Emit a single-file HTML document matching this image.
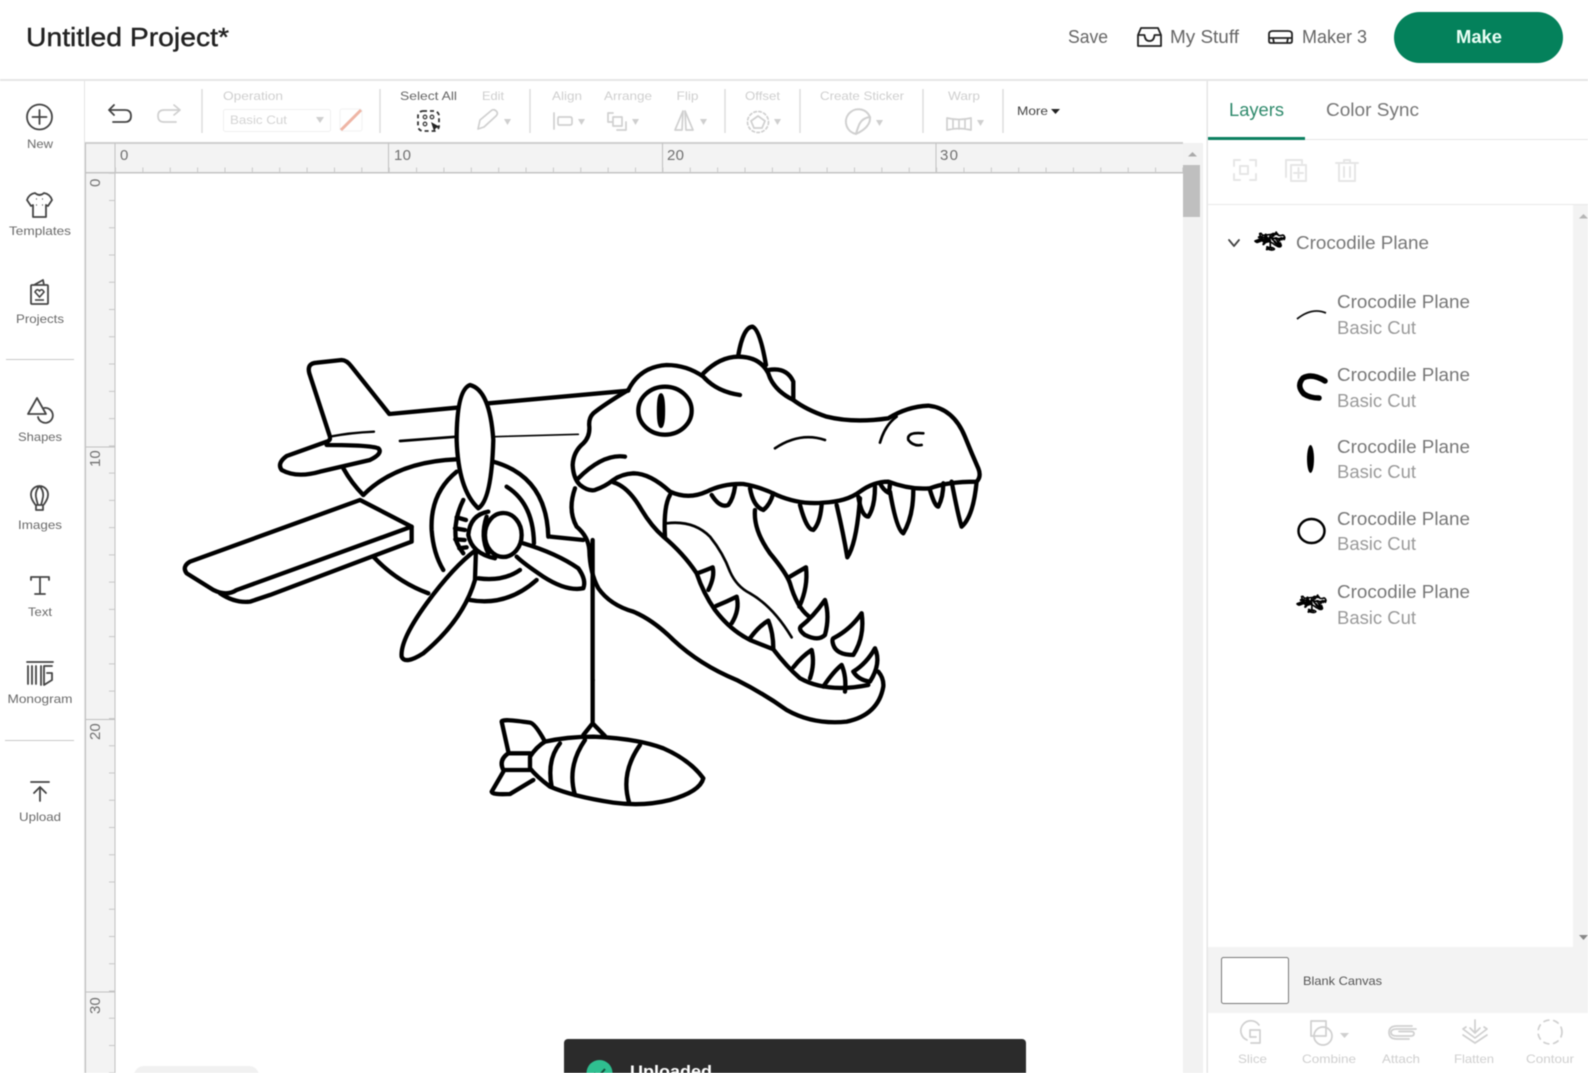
<!DOCTYPE html>
<html lang="en">
<head>
<meta charset="utf-8">
<title>Untitled Project</title>
<style>
html,body{margin:0;padding:0;background:#fff;width:1588px;height:1073px;overflow:hidden}
svg{display:block;position:absolute;left:0;top:0;filter:blur(.5px)}
text{font-family:"Liberation Sans",sans-serif}
.l{font-size:12px;fill:#6a6a6a;text-anchor:middle}
.d{font-size:12px;fill:#cfcfcf;text-anchor:middle}
.n{font-size:18px;fill:#777}
.b{font-size:18px;fill:#9a9a9a}
.r{font-size:15px;fill:#707070}
.ic{fill:none;stroke:#444;stroke-width:1.800;stroke-linecap:round;stroke-linejoin:round}
.dis{fill:none;stroke:#d0d0d0;stroke-width:1.700;stroke-linecap:round;stroke-linejoin:round}
.pale{fill:none;stroke:#e6e6e6;stroke-width:2;stroke-linecap:round;stroke-linejoin:round}
.tri{fill:#cfcfcf}
</style>
</head>
<body>
<svg width="1588" height="1073" viewBox="0 0 1588 1073" xmlns="http://www.w3.org/2000/svg">
<defs>
<g id="art" fill="none" stroke="#000" stroke-linecap="round" stroke-linejoin="round">
  <!-- plane -->
  <g transform="translate(170 340) scale(.3333)">
    <path d="M480 290L418 100Q410 70 440 68L515 60Q530 60 545 80L658 222L860 203"/>
    <path d="M955 190L1375 152"/>
    <path d="M480 295Q480 302 470 305L350 348Q320 370 335 390Q380 415 450 395L600 360Q640 340 625 325Q600 315 470 315"/>
    <path d="M480 290Q540 278 612 275" style="stroke-width:7"/>
    <path d="M690 303L860 290" style="stroke-width:8"/>
    <path d="M975 290L1225 283" style="stroke-width:5"/>
    <path d="M520 385Q545 430 580 465"/>
    <path d="M580 465Q680 365 860 358"/>
    <path d="M610 650Q680 725 775 760"/>
    <path d="M570 480L60 665Q35 680 50 700L130 750Q170 770 200 750L725 560L570 480Z"/>
    <path d="M150 760Q195 790 240 785L300 765L725 605L725 560"/>
    <path d="M860 395Q780 460 785 570Q790 640 820 690"/>
    <path d="M970 365Q1130 410 1135 590"/>
    <path d="M1100 720Q1010 800 900 780"/>
    <path d="M1010 440Q1090 490 1092 610"/>
    <path d="M1050 690Q1000 725 925 715"/>
    <path d="M880 480Q850 540 858 600Q865 620 880 640"/>
    <path d="M860 532L888 540M855 565L885 570M856 598L884 600M868 625L890 622"/>
    <path fill="#fff" d="M955 515Q900 525 895 585Q905 640 975 655"/>
    <ellipse cx="1000" cy="585" rx="55" ry="66" fill="#fff"/>
    <path d="M950 530Q930 590 955 640"/>
    <path fill="#fff" d="M900 135Q860 150 860 300Q865 450 925 505Q965 480 970 300Q960 150 900 135Z"/>
    <path fill="#fff" d="M918 630Q850 680 770 790Q690 900 695 950Q705 975 760 940Q880 840 915 720Z"/>
    <path fill="#fff" d="M1060 610Q1160 640 1225 685Q1250 720 1240 745Q1190 755 1120 710Q1060 670 1040 650"/>
    <path d="M1140 590L1240 600"/>
    <path d="M1268 600V1020"/>
  </g>
  <!-- crocodile -->
  <g transform="translate(560 310) scale(.3333)">
    <path d="M205 240Q130 285 100 310Q85 325 88 350Q90 380 70 400Q40 425 38 465Q40 505 60 525Q85 545 105 540Q135 530 160 510Q185 492 220 490Q270 490 330 545Q385 570 440 545Q490 520 550 522Q600 530 650 555Q720 585 790 578Q860 575 900 545Q940 515 985 515Q1050 540 1110 535Q1160 515 1250 515Q1265 500 1255 475Q1235 430 1215 380Q1180 295 1105 287Q1040 290 985 325Q880 340 800 320Q740 300 700 270Q640 240 625 190Q600 140 535 140Q480 140 430 190"/>
    <path d="M205 240Q240 170 320 165Q380 165 430 200Q470 245 540 255"/>
    <path d="M535 135Q550 50 578 50Q600 60 618 165"/>
    <path d="M625 180Q680 170 700 215L700 270"/>
    <ellipse cx="315" cy="302" rx="80" ry="72"/>
    <ellipse cx="303" cy="302" rx="6" ry="46" fill="#000"/>
    <path d="M195 440Q130 430 55 505"/>
    <path d="M645 415Q720 365 795 390" style="stroke-width:8"/>
    <path d="M1090 370Q1040 365 1045 390Q1060 410 1085 405" style="stroke-width:8"/>
    <path d="M960 398Q975 345 1010 320" style="stroke-width:8"/>
    <path d="M45 535Q22 600 50 650Q85 680 88 720Q90 790 115 835Q150 885 220 905Q280 930 340 990Q420 1065 530 1110Q610 1150 680 1200Q760 1245 860 1235Q955 1215 970 1130Q972 1105 955 1085"/>
    <path d="M160 517Q205 530 245 600Q275 650 310 680Q370 730 410 790Q430 850 465 900Q510 960 570 990Q620 1010 640 1018Q680 1070 720 1105Q800 1150 925 1125"/>
    <path d="M330 555Q310 590 315 680"/>
    <path d="M320 640Q400 630 450 680Q490 730 510 785Q530 830 570 850Q640 890 695 982" style="stroke-width:8"/>
    <path d="M585 600Q580 660 630 730Q680 790 690 820Q710 890 745 918"/>
    <path d="M412 790Q440 780 458 772Q465 800 445 840"/>
    <path d="M468 888Q500 875 530 860Q540 900 515 940"/>
    <path d="M570 985Q595 950 625 932Q640 970 640 1015"/>
    <path d="M700 1072Q725 1040 755 1020Q765 1060 750 1105"/>
    <path d="M790 1130Q820 1085 845 1065Q860 1100 855 1145"/>
    <path d="M690 800Q715 785 738 772Q745 830 718 890"/>
    <path d="M722 950Q760 920 795 870Q810 920 795 975Q775 995 735 975Q715 960 722 950Z"/>
    <path d="M820 985Q870 960 905 910Q915 980 880 1035Q830 1035 820 1005Q815 990 820 985Z"/>
    <path d="M880 1085Q920 1060 945 1015Q965 1060 930 1115Q895 1110 880 1085Z"/>
    <path d="M455 555Q480 595 505 585Q520 565 525 530"/>
    <path d="M570 535Q580 590 610 600Q630 585 640 550"/>
    <path d="M720 585Q740 660 760 660Q780 640 785 585"/>
    <path d="M830 585Q850 670 862 742Q890 700 900 565"/>
    <path d="M895 560Q905 620 925 620Q945 590 945 530"/>
    <path d="M960 520Q970 540 985 548Q990 535 990 520"/>
    <path d="M990 545Q1010 660 1030 670Q1060 620 1060 540"/>
    <path d="M1110 540Q1125 590 1135 590Q1150 560 1150 520"/>
    <path d="M1175 515Q1195 620 1205 650Q1240 620 1250 515"/>
  </g>
  <!-- bomb -->
  <g transform="translate(470 680) scale(.3333)">
    <path d="M225 185Q290 170 370 170Q500 175 580 205Q660 240 700 295Q690 335 600 360Q520 380 430 368Q310 350 240 320Q200 290 180 265L180 230Q200 200 225 185Z"/>
    <path d="M270 190Q230 240 245 320"/>
    <path d="M345 180Q290 260 315 345"/>
    <path d="M510 195Q450 280 478 370"/>
    <path d="M115 215L95 125Q95 115 180 128Q195 130 225 185"/>
    <path d="M100 275L65 335Q65 345 120 342L190 300"/>
    <path d="M180 220L115 220Q85 240 100 270L180 270"/>
    <path d="M368 0V125"/>
    <path d="M340 165L368 130L405 168"/>
  </g>
</g>
</defs>

<!-- page bg -->
<rect width="1588" height="1073" fill="#fff"/>

<!-- header -->
<text x="26" y="46" font-size="26" fill="#222" stroke="#222" stroke-width=".4" textLength="203" lengthAdjust="spacingAndGlyphs">Untitled Project*</text>
<text x="1068" y="43" font-size="18" fill="#666" textLength="40" lengthAdjust="spacingAndGlyphs">Save</text>
<path class="ic" style="stroke:#222" d="M1141 28H1158L1161 35V46H1138V35ZM1138 35H1144.500Q1145 41 1149.500 41Q1154 41 1154.500 35H1161"/>
<text x="1170" y="43" font-size="18" fill="#666" textLength="69" lengthAdjust="spacingAndGlyphs">My Stuff</text>
<path class="ic" style="stroke:#222" d="M1269 41V34Q1269 31 1273 31H1288Q1292 31 1292 34V41Q1292 43 1290 43H1271Q1269 43 1269 41ZM1269 38H1273L1274 43M1292 38H1288L1287 43M1273 38H1288"/>
<text x="1302" y="43" font-size="18" fill="#666" textLength="65" lengthAdjust="spacingAndGlyphs">Maker 3</text>
<rect x="1394" y="12" width="169" height="51" rx="25.500" fill="#04815b"/>
<text x="1456" y="43" font-size="18" font-weight="700" fill="#eafff6" textLength="46" lengthAdjust="spacingAndGlyphs">Make</text>
<rect x="0" y="79" width="1588" height="2" fill="#e6e6e6"/>

<!-- sidebar -->
<rect x="84" y="81" width="1" height="992" fill="#e4e4e4"/>
<circle cx="39.500" cy="117" r="12.500" class="ic"/>
<path class="ic" d="M39.500 110V124M32.500 117H46.500"/>
<text class="l" x="40" y="148" textLength="26" lengthAdjust="spacingAndGlyphs">New</text>
<path class="ic" d="M35 193Q39.500 197 44 193Q50 194 52 200L48 206L46 205V217H33V205L31 206L27 200Q29 194 35 193Z"/>
<path d="M36 199h1M42 199h1M36 205h1M42 205h1" stroke="#555" stroke-width="1.200"/>
<text class="l" x="40" y="235" textLength="62" lengthAdjust="spacingAndGlyphs">Templates</text>
<path class="ic" d="M32 285H47Q48 285 48 286V303Q48 304 47 304H32Q31 304 31 303V286Q31 285 32 285ZM34 285L43 280L44 285"/>
<path d="M39.500 297L35 292Q37 288 39.500 291Q42 288 44 292Z" fill="none" stroke="#444" stroke-width="1.600"/>
<path d="M35 300H44" stroke="#444" stroke-width="1.600"/>
<text class="l" x="40" y="323" textLength="48" lengthAdjust="spacingAndGlyphs">Projects</text>
<rect x="6" y="359" width="68" height="1" fill="#c8c8c8"/>
<path class="ic" d="M37 398L28 414H46Z"/>
<path class="ic" d="M44 408A7.500 7.500 0 1 1 38 417"/>
<text class="l" x="40" y="441" textLength="44" lengthAdjust="spacingAndGlyphs">Shapes</text>
<path class="ic" d="M39.500 486A8.500 8.500 0 0 1 48 495Q48 499 43.500 505H35.500Q31 499 31 495A8.500 8.500 0 0 1 39.500 486ZM39.500 486Q35 491 36 497Q37 502 38 505M39.500 486Q44 491 43 497Q42 502 41 505M36 505V510H43V505"/>
<text class="l" x="40" y="529" textLength="44" lengthAdjust="spacingAndGlyphs">Images</text>
<path class="ic" d="M31 580V577H49V580M40 577V594M35 594H45"/>
<text class="l" x="40" y="616" textLength="24" lengthAdjust="spacingAndGlyphs">Text</text>
<path class="ic" d="M27 662H53M28 666V684M32 666V684M36 666V684M41 666V685M44 666H52M44 666V685L52 680V673H47"/>
<text class="l" x="40" y="703" textLength="65" lengthAdjust="spacingAndGlyphs">Monogram</text>
<rect x="5" y="740" width="69" height="1" fill="#c8c8c8"/>
<path class="ic" d="M31 782H49M40 801V787M34 793L40 787L46 793"/>
<text class="l" x="40" y="821" textLength="42" lengthAdjust="spacingAndGlyphs">Upload</text>

<!-- toolbar -->
<path d="M202 89V133M380 89V133M530 89V133M725 89V133M800 89V133M923 89V133M1003 89V133" stroke="#dedede" stroke-width="1.500"/>
<path class="ic" d="M114 105L109 110L114 115M109 110H125Q131 110 131 116Q131 122 125 122H113"/>
<path class="dis" d="M174 105L180 110L174 115M180 110H164Q158 110 158 116Q158 122 164 122H176"/>
<text class="d" x="253" y="100" textLength="60" lengthAdjust="spacingAndGlyphs">Operation</text>
<rect x="223.500" y="109.500" width="107" height="22" rx="2" fill="#fff" stroke="#efefef"/>
<text x="230" y="124" font-size="12" fill="#d4d4d4" textLength="57" lengthAdjust="spacingAndGlyphs">Basic Cut</text>
<path class="tri" d="M316 117H324L320 123Z"/>
<rect x="340" y="109" width="22" height="22" rx="2" fill="#fff" stroke="#f2f2f2"/>
<path d="M341 130L361 110" stroke="#efb5a5" stroke-width="3"/>

<text class="l" x="428.500" y="100" textLength="57" lengthAdjust="spacingAndGlyphs" style="fill:#666">Select All</text>
<rect x="418" y="111" width="21" height="20" rx="5" fill="none" stroke="#333" stroke-width="1.800" stroke-dasharray="4 3"/>
<circle cx="425" cy="117" r="1.800" fill="none" stroke="#444" stroke-width="1.300"/>
<circle cx="432" cy="117" r="1.800" fill="none" stroke="#444" stroke-width="1.300"/>
<circle cx="425" cy="124" r="1.800" fill="none" stroke="#444" stroke-width="1.300"/>
<path d="M431 122L440 127L436 128L434 131Z" fill="#222"/>

<text class="d" x="493" y="100" textLength="22" lengthAdjust="spacingAndGlyphs">Edit</text>
<path class="dis" d="M478 129L480 120L492 110Q495 109 497 112Q498 114 496 116L484 127Z"/>
<path class="tri" d="M504 119H511L507.500 125Z"/>

<text class="d" x="567" y="100" textLength="30" lengthAdjust="spacingAndGlyphs">Align</text>
<path class="dis" d="M554 113V129M559 117H570Q572 117 572 119V123Q572 125 570 125H559Q558 125 558 123V119Q558 117 559 117Z"/>
<path class="tri" d="M578 119H585L581.500 125Z"/>

<text class="d" x="628" y="100" textLength="48" lengthAdjust="spacingAndGlyphs">Arrange</text>
<path class="dis" d="M613 113H608V122H612M613 117H622V126H613ZM626 122V130H617"/>
<path class="tri" d="M632 119H639L635.500 125Z"/>

<text class="d" x="687.500" y="100" textLength="22" lengthAdjust="spacingAndGlyphs">Flip</text>
<path class="dis" d="M683 111L675 130H682ZM685 111L693 130H686Z"/>
<path class="tri" d="M700 119H707L703.500 125Z"/>

<text class="d" x="762.500" y="100" textLength="35" lengthAdjust="spacingAndGlyphs">Offset</text>
<path class="dis" d="M758 116L765 121L762 128H754L751 121Z"/>
<circle cx="758" cy="122" r="10.500" class="dis" stroke-dasharray="2.500 2.500"/>
<path class="tri" d="M774 119H781L777.500 125Z"/>

<text class="d" x="862" y="100" textLength="84" lengthAdjust="spacingAndGlyphs">Create Sticker</text>
<path class="dis" style="stroke-width:2" d="M856 134A12.500 12.500 0 1 1 870 117Q862 118 859 125Q857 130 856 134ZM870 117Q871 127 856 134"/>
<path class="tri" d="M876 120H883L879.500 126Z"/>

<text class="d" x="964" y="100" textLength="32" lengthAdjust="spacingAndGlyphs">Warp</text>
<path class="dis" d="M947 118Q959 121 971 118V130Q959 127 947 130ZM953 120V129M959 120V129M965 120V129"/>
<path class="tri" d="M977 120H984L980.500 126Z"/>

<text x="1017" y="115" font-size="12" fill="#444" textLength="31" lengthAdjust="spacingAndGlyphs">More</text>
<path d="M1051 109H1060L1055.500 114Z" fill="#222"/>

<!-- rulers -->
<rect x="85" y="143" width="1098" height="30" fill="#f3f3f3"/>
<rect x="85" y="173" width="30" height="900" fill="#f3f3f3"/>
<rect x="85" y="142" width="1098" height="2" fill="#cfcfcf"/>
<rect x="85" y="172" width="1098" height="1.500" fill="#c4c4c4"/>
<rect x="85" y="143" width="1" height="930" fill="#bdbdbd"/>
<rect x="114.500" y="143" width="1" height="930" fill="#c0c0c0"/>
<path d="M388.500 143V172M662.500 143V172M936 143V172" stroke="#c0c0c0"/>
<path d="M85 447H115M85 719.500H115M85 992H115" stroke="#c0c0c0"/>
<line x1="115" y1="170" x2="1183" y2="170" stroke="#c8c8c8" stroke-width="5" stroke-dasharray="1 26.370"/>
<line x1="112" y1="173" x2="112" y2="1073" stroke="#c8c8c8" stroke-width="6" stroke-dasharray="1 26.260" stroke-dashoffset="-27"/>
<text class="r" x="120" y="160">0</text>
<text class="r" x="394" y="160" textLength="17">10</text>
<text class="r" x="667" y="160" textLength="17">20</text>
<text class="r" x="940" y="160" textLength="18">30</text>
<text class="r" transform="translate(100 187) rotate(-90)">0</text>
<text class="r" transform="translate(100 467) rotate(-90)">10</text>
<text class="r" transform="translate(100 740) rotate(-90)">20</text>
<text class="r" transform="translate(100 1014) rotate(-90)">30</text>

<!-- canvas scrollbar -->
<rect x="1183" y="143" width="23" height="930" fill="#f2f2f2"/>
<rect x="1183" y="165" width="17" height="52" fill="#bfbfbf"/>
<path d="M1188 156.500H1197L1192.500 152Z" fill="#aaa"/>
<rect x="1203" y="81" width="4" height="992" fill="#fff"/>
<rect x="1206.500" y="81" width="1.500" height="992" fill="#e6e6e6"/>

<!-- artwork -->
<use href="#art" stroke-width="13"/>

<!-- toast -->
<rect x="134" y="1066" width="125" height="20" rx="10" fill="#f1f1f1"/>
<rect x="564" y="1039" width="462" height="50" rx="4" fill="#2b2b2b"/>
<circle cx="599.500" cy="1073" r="13" fill="#2fbf90"/>
<path d="M594 1073L598 1077L605 1069" fill="none" stroke="#14503d" stroke-width="2"/>
<text x="630" y="1077" font-size="17" font-weight="700" fill="#fff" textLength="82" lengthAdjust="spacingAndGlyphs">Uploaded</text>

<!-- right panel -->
<text x="1229" y="116" font-size="18" fill="#2f8a6c" textLength="55" lengthAdjust="spacingAndGlyphs">Layers</text>
<text x="1326" y="116" font-size="18" fill="#777" textLength="93" lengthAdjust="spacingAndGlyphs">Color Sync</text>
<rect x="1208" y="139" width="380" height="1" fill="#e6e6e6"/>
<rect x="1208" y="137" width="97" height="3" fill="#0b8060"/>

<path class="pale" d="M1234 166V160H1240M1250 160H1256V166M1256 174V180H1250M1240 180H1234V174M1240 166H1248V174H1240Z"/>
<path class="pale" d="M1286 177V160H1302V163M1291 165H1306V181H1291ZM1298.500 168V178M1294 173H1303"/>
<path class="pale" d="M1336 163H1358M1344 163V160H1350V163M1339 163V181H1355V163M1344 167V177M1350 167V177"/>
<rect x="1208" y="204" width="380" height="1" fill="#e8e8e8"/>

<rect x="1573" y="205" width="15" height="742" fill="#f3f3f3"/>
<path d="M1579 218.500H1588L1583.500 214Z" fill="#b5b5b5"/>
<path d="M1579 935H1588L1583.500 940Z" fill="#888"/>

<!-- layers -->
<path d="M1229 240L1234 246L1239 240" fill="none" stroke="#444" stroke-width="1.800" stroke-linecap="round" stroke-linejoin="round"/>
<g transform="translate(1255 232) scale(.0375) translate(-185 -325)">
  <use href="#art" stroke-width="130"/>
</g>
<text class="n" x="1296" y="249" textLength="133" lengthAdjust="spacingAndGlyphs">Crocodile Plane</text>

<path d="M1297 319Q1312 307 1326 313" fill="none" stroke="#111" stroke-width="1.800"/>
<text class="n" x="1337" y="308" textLength="133" lengthAdjust="spacingAndGlyphs">Crocodile Plane</text>
<text class="b" x="1337" y="334" textLength="79" lengthAdjust="spacingAndGlyphs">Basic Cut</text>

<path d="M1325 381Q1312 373 1303 378Q1296 386 1304 394Q1310 398 1319 398" fill="none" stroke="#000" stroke-width="5.500" stroke-linecap="round"/>
<text class="n" x="1337" y="381" textLength="133" lengthAdjust="spacingAndGlyphs">Crocodile Plane</text>
<text class="b" x="1337" y="407" textLength="79" lengthAdjust="spacingAndGlyphs">Basic Cut</text>

<ellipse cx="1310.500" cy="459" rx="3.500" ry="14" fill="#000"/>
<text class="n" x="1337" y="453" textLength="133" lengthAdjust="spacingAndGlyphs">Crocodile Plane</text>
<text class="b" x="1337" y="478" textLength="79" lengthAdjust="spacingAndGlyphs">Basic Cut</text>

<ellipse cx="1311.500" cy="531" rx="13" ry="12" fill="none" stroke="#000" stroke-width="2.500"/>
<text class="n" x="1337" y="525" textLength="133" lengthAdjust="spacingAndGlyphs">Crocodile Plane</text>
<text class="b" x="1337" y="550" textLength="79" lengthAdjust="spacingAndGlyphs">Basic Cut</text>

<g transform="translate(1297 595) scale(.0365) translate(-185 -325)">
  <use href="#art" stroke-width="130"/>
</g>
<text class="n" x="1337" y="598" textLength="133" lengthAdjust="spacingAndGlyphs">Crocodile Plane</text>
<text class="b" x="1337" y="624" textLength="79" lengthAdjust="spacingAndGlyphs">Basic Cut</text>

<!-- blank canvas -->
<rect x="1208" y="947" width="380" height="66" fill="#f3f3f3"/>
<rect x="1221.500" y="957.500" width="67" height="46" rx="2" fill="#fff" stroke="#777"/>
<text x="1303" y="985" font-size="12" fill="#555" textLength="79" lengthAdjust="spacingAndGlyphs">Blank Canvas</text>

<!-- bottom tools -->
<path class="dis" d="M1247 1040A10 10 0 1 1 1259 1025"/>
<path class="dis" d="M1250 1030H1260V1043H1251M1250 1030V1037H1256"/>
<text class="d" x="1252.500" y="1063" textLength="29" lengthAdjust="spacingAndGlyphs">Slice</text>
<path class="dis" d="M1311 1021H1326V1036H1311Z"/>
<circle cx="1323" cy="1036" r="9" class="dis"/>
<path class="tri" d="M1340 1033H1349L1344.500 1038Z"/>
<text class="d" x="1329" y="1063" textLength="54" lengthAdjust="spacingAndGlyphs">Combine</text>
<path class="dis" d="M1416 1029H1397Q1391 1029 1391 1032.500Q1391 1036 1397 1036H1411Q1414 1036 1414 1033.500Q1414 1031.500 1411 1031.500H1399M1412 1026H1397Q1389 1026 1389 1032.500Q1389 1039 1397 1039H1409"/>
<text class="d" x="1401" y="1063" textLength="38" lengthAdjust="spacingAndGlyphs">Attach</text>
<path class="dis" d="M1475 1020V1032M1470 1028L1475 1033L1480 1028M1466 1027L1463 1029L1475 1038L1487 1029L1484 1027M1463 1035L1475 1043L1487 1035"/>
<text class="d" x="1474" y="1063" textLength="40" lengthAdjust="spacingAndGlyphs">Flatten</text>
<circle cx="1550" cy="1032" r="12" class="dis" stroke-dasharray="5 5"/>
<text class="d" x="1550" y="1063" textLength="48" lengthAdjust="spacingAndGlyphs">Contour</text>
</svg>
</body>
</html>
